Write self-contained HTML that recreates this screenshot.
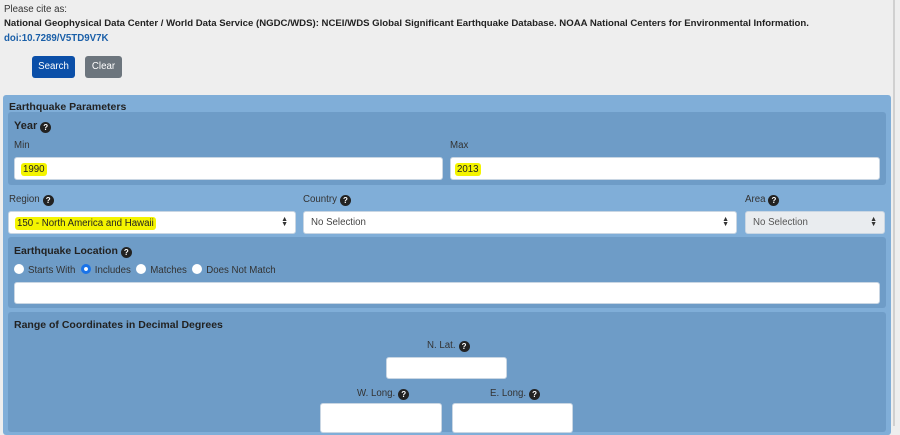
<!DOCTYPE html>
<html><head><meta charset="utf-8"><style>
*{box-sizing:border-box;margin:0;padding:0}
body{width:900px;height:426px;overflow:hidden;background:#eeeeee;font-family:"Liberation Sans",sans-serif;font-size:9.7px;color:#222;position:relative}
.a{position:absolute;white-space:nowrap}
.b{font-weight:bold}
.in{position:absolute;background:#fff;border-radius:3px;border:1px solid #c9d6e3}
.q{display:inline-block;width:11px;height:11px;border-radius:50%;background:#222;color:#fff;font-size:8px;font-weight:bold;text-align:center;line-height:11px;vertical-align:-1px;margin-left:3px}
.hl{background:#f4f400;padding:1px 2px;border-radius:3px}
.arr{position:absolute;right:7px;top:5px;font-size:7px;line-height:5px;color:#333}
.r{display:inline-block;width:10px;height:10px;border-radius:50%;background:#fff;vertical-align:-1px;margin-right:4px}
.rs{background:#1a73e8;border:3px solid #1a73e8;box-shadow:inset 0 0 0 2px #fff}
</style></head><body>
<div class="a" style="left:893px;top:0;width:2px;height:426px;background:#d0d0d0"></div>
<div class="a" style="left:4px;top:4px;color:#333">Please cite as:</div>
<div class="a b" style="left:4px;top:18px;font-size:9.6px">National Geophysical Data Center / World Data Service (NGDC/WDS): NCEI/WDS Global Significant Earthquake Database. NOAA National Centers for Environmental Information.</div>
<div class="a b" style="left:4px;top:33px;color:#1a5fa8">doi:10.7289/V5TD9V7K</div>
<div class="a" style="left:32px;top:56px;width:43px;height:22px;background:#0b4fa8;border-radius:3px;color:#fff;text-align:center;line-height:22px">Search</div>
<div class="a" style="left:85px;top:56px;width:37px;height:22px;background:#6c757d;border-radius:3px;color:#fff;text-align:center;line-height:22px">Clear</div>

<div class="a" style="left:3px;top:95px;width:888px;height:340px;background:#80aed8;border-radius:3px"></div>
<div class="a b" style="left:9px;top:101px;font-size:10.5px">Earthquake Parameters</div>

<div class="a" style="left:8px;top:112px;width:878px;height:73px;background:#6e9cc7;border-radius:3px"></div>
<div class="a b" style="left:14px;top:120px;font-size:11px">Year<span class="q">?</span></div>
<div class="a" style="left:14px;top:140px;color:#333">Min</div>
<div class="a" style="left:450px;top:140px;color:#333">Max</div>
<div class="in" style="left:14px;top:157px;width:429px;height:23px"><span class="a hl" style="left:6px;top:5px">1990</span></div>
<div class="in" style="left:450px;top:157px;width:430px;height:23px"><span class="a hl" style="left:4px;top:5px">2013</span></div>

<div class="a" style="left:9px;top:194px;color:#333">Region<span class="q">?</span></div>
<div class="a" style="left:303px;top:194px;color:#333">Country<span class="q">?</span></div>
<div class="a" style="left:745px;top:194px;color:#333">Area<span class="q">?</span></div>
<div class="in" style="left:8px;top:211px;width:288px;height:23px"><span class="a hl" style="left:6px;top:5px">150 - North America and Hawaii</span><span class="arr">▲<br>▼</span></div>
<div class="in" style="left:303px;top:211px;width:434px;height:23px"><span class="a" style="left:7px;top:5px;color:#444">No Selection</span><span class="arr">▲<br>▼</span></div>
<div class="in" style="left:745px;top:211px;width:140px;height:23px;background:#e9ecef"><span class="a" style="left:7px;top:5px;color:#555">No Selection</span><span class="arr">▲<br>▼</span></div>

<div class="a" style="left:8px;top:237px;width:878px;height:71px;background:#6e9cc7;border-radius:3px"></div>
<div class="a b" style="left:14px;top:245px;font-size:10.5px">Earthquake Location<span class="q">?</span></div>
<div class="a" style="left:14px;top:264px;color:#333"><span class="r"></span>Starts With&nbsp;&nbsp;<span class="r rs"></span>Includes&nbsp;&nbsp;<span class="r"></span>Matches&nbsp;&nbsp;<span class="r"></span>Does Not Match</div>
<div class="in" style="left:14px;top:282px;width:866px;height:22px"></div>

<div class="a" style="left:8px;top:312px;width:878px;height:120px;background:#6e9cc7;border-radius:3px"></div>
<div class="a b" style="left:14px;top:319px;font-size:10.5px">Range of Coordinates in Decimal Degrees</div>
<div class="a" style="left:427px;top:340px;color:#333">N. Lat.<span class="q">?</span></div>
<div class="in" style="left:386px;top:357px;width:121px;height:22px"></div>
<div class="a" style="left:357px;top:388px;color:#333">W. Long.<span class="q">?</span></div>
<div class="a" style="left:490px;top:388px;color:#333">E. Long.<span class="q">?</span></div>
<div class="in" style="left:320px;top:403px;width:122px;height:30px"></div>
<div class="in" style="left:452px;top:403px;width:121px;height:30px"></div>
</body></html>
